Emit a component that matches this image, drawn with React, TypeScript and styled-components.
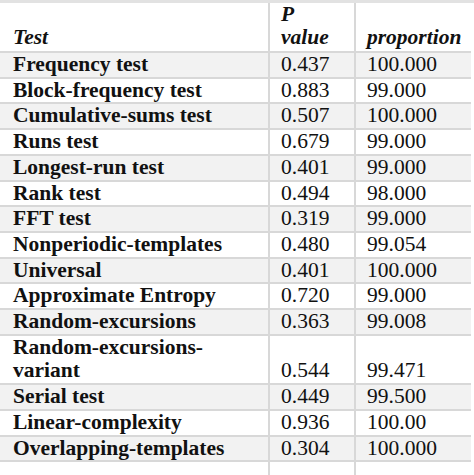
import React from "react";
import styled, { createGlobalStyle } from "styled-components";

interface IRow {
    name: React.ReactNode;
    p: string;
    proportion: string;
}

const rows: IRow[] = [
    { name: "Frequency test", p: "0.437", proportion: "100.000" },
    { name: "Block-frequency test", p: "0.883", proportion: "99.000" },
    { name: "Cumulative-sums test", p: "0.507", proportion: "100.000" },
    { name: "Runs test", p: "0.679", proportion: "99.000" },
    { name: "Longest-run test", p: "0.401", proportion: "99.000" },
    { name: "Rank test", p: "0.494", proportion: "98.000" },
    { name: "FFT test", p: "0.319", proportion: "99.000" },
    { name: "Nonperiodic-templates", p: "0.480", proportion: "99.054" },
    { name: "Universal", p: "0.401", proportion: "100.000" },
    { name: "Approximate Entropy", p: "0.720", proportion: "99.000" },
    { name: "Random-excursions", p: "0.363", proportion: "99.008" },
    { name: <>Random-excursions-<br />variant</>, p: "0.544", proportion: "99.471" },
    { name: "Serial test", p: "0.449", proportion: "99.500" },
    { name: "Linear-complexity", p: "0.936", proportion: "100.00" },
    { name: "Overlapping-templates", p: "0.304", proportion: "100.000" },
];

const serif = `"Liberation Serif", "Times New Roman", Times, serif`;
const line = "#d8d8d8";

const GlobalStyle = createGlobalStyle`
body {
    margin: 0;
    background: #fff;
    font-family: ${serif};
    color: #111;
}
`

const Page = styled.div`
width: 474px;
height: 475px;
overflow: hidden;
border-top: 3px solid #e2e2e2;
box-sizing: border-box;
font-family: ${serif};
`

const Table = styled.table`
width: 471px;
border-collapse: collapse;
table-layout: fixed;
font-family: ${serif};
font-size: 21.5px;
`

const HeadCell = styled.th<{ $w: number }>`
box-sizing: border-box;
width: ${p => p.$w}px;
height: 48px;
padding: 0 0 2px ${p => p.$w > 200 ? 13 : 11}px;
text-align: left;
vertical-align: bottom;
font-family: ${serif};
font-style: italic;
font-weight: 700;
font-size: 21.5px;
line-height: 23px;
white-space: nowrap;
border-bottom: 2px solid ${line};
border-left: 2px solid ${line};
&:first-child { border-left: none; }
`

const Row = styled.tr<{ $striped: boolean }>`
background: ${p => p.$striped ? "#f2f2f2" : "#fff"};
`

const NameCell = styled.td`
padding: 0 0 0 13px;
font-family: ${serif};
font-weight: 700;
font-size: 21.5px;
line-height: 23.7px;
white-space: nowrap;
border-bottom: 2px solid ${line};
vertical-align: bottom;
`

const NumCell = styled.td`
padding: 0 0 0 11px;
font-family: ${serif};
font-size: 21.5px;
line-height: 23.7px;
border-bottom: 2px solid ${line};
border-left: 2px solid ${line};
vertical-align: bottom;
`

const EmptyCell = styled.td<{ $first?: boolean }>`
height: 24px;
border-left: ${p => p.$first ? "none" : `2px solid ${line}`};
`

const App: React.FC = () => {
    return (
        <>
            <GlobalStyle />
            <Page>
                <Table>
                    <thead>
                        <tr>
                            <HeadCell $w={269}>Test</HeadCell>
                            <HeadCell $w={86}>P<br />value</HeadCell>
                            <HeadCell $w={116}>proportion</HeadCell>
                        </tr>
                    </thead>
                    <tbody>
                        {rows.map((r, i) => (
                            <Row key={i} $striped={i % 2 === 0}>
                                <NameCell>{r.name}</NameCell>
                                <NumCell>{r.p}</NumCell>
                                <NumCell>{r.proportion}</NumCell>
                            </Row>
                        ))}
                        <tr>
                            <EmptyCell $first />
                            <EmptyCell />
                            <EmptyCell />
                        </tr>
                    </tbody>
                </Table>
            </Page>
        </>
    )
}

export default App;
